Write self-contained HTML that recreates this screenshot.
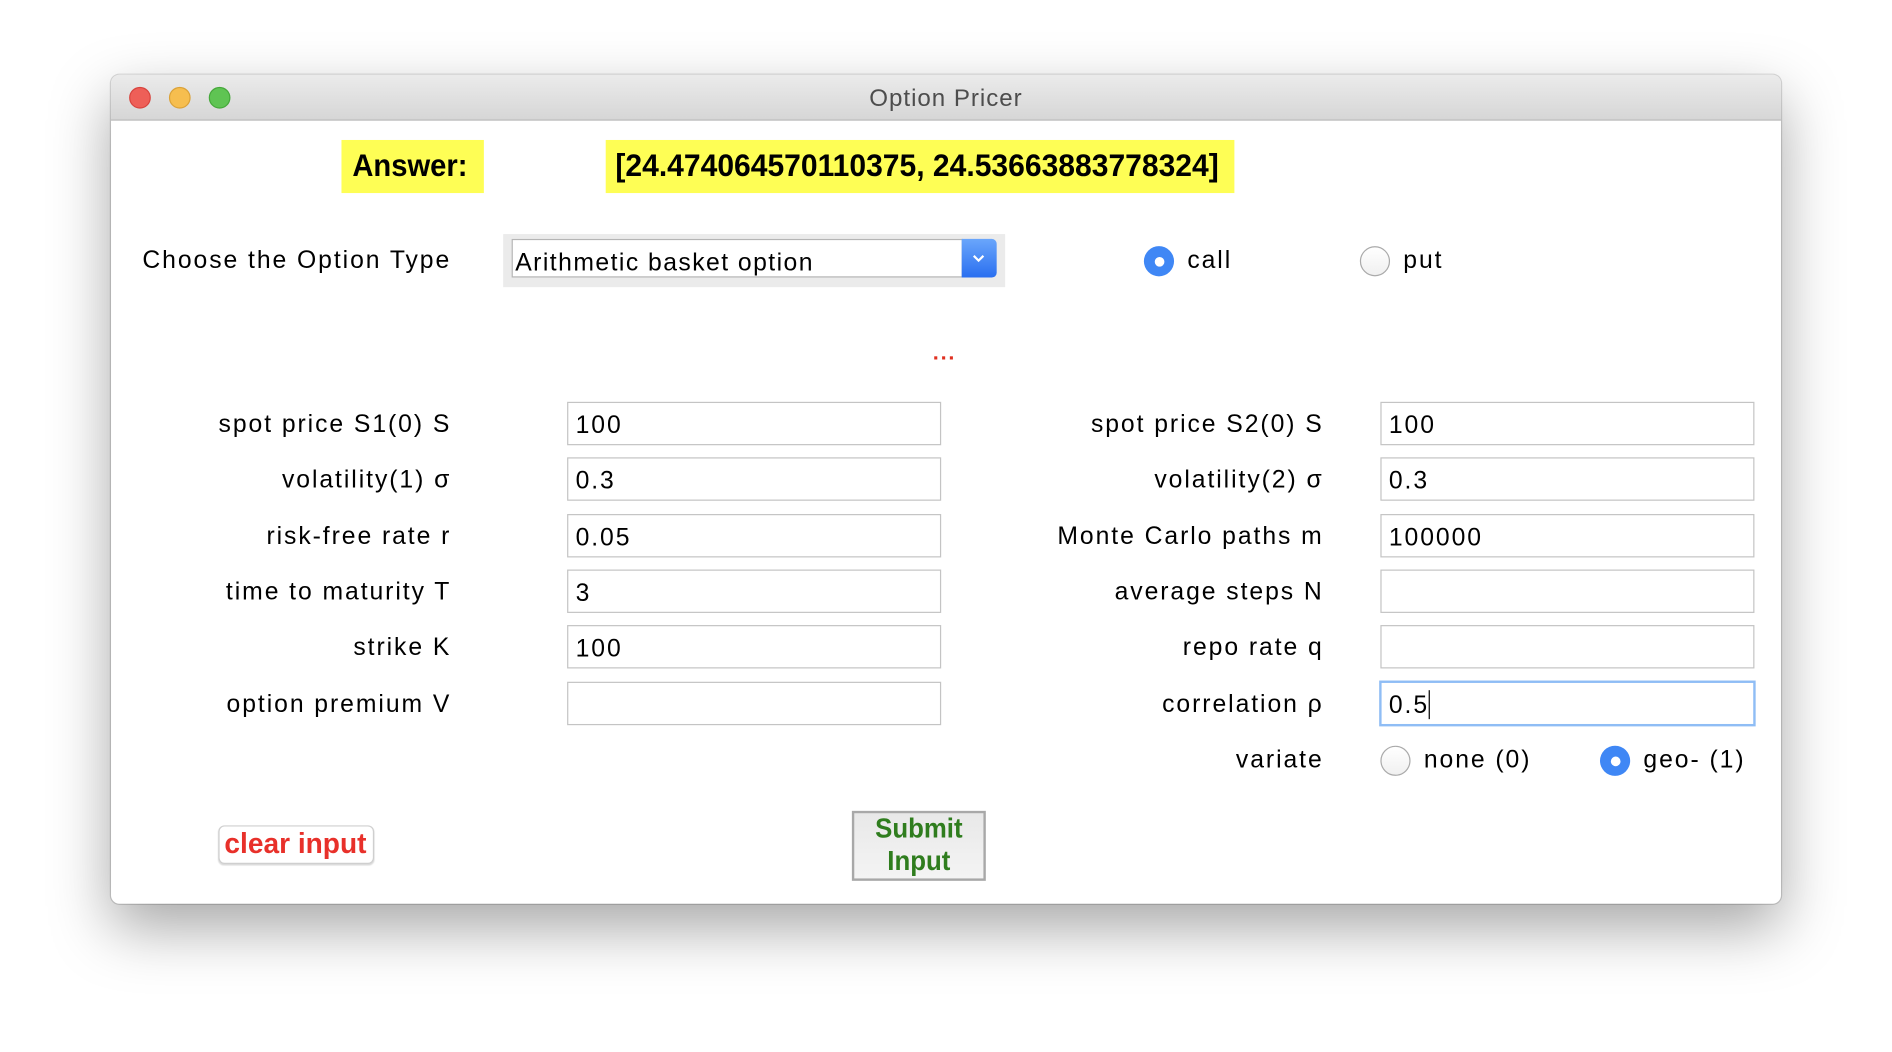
<!DOCTYPE html>
<html><head><meta charset="utf-8"><style>
html,body{margin:0;padding:0;background:#fff;overflow:hidden;width:1892px;height:1052px}
#s{position:absolute;left:0;top:0;width:1568px;height:872px;transform:scale(1.20663);transform-origin:0 0;font-family:"Liberation Sans",Arial,sans-serif;color:#000}
.a{position:absolute}
.win{left:92px;top:62px;width:1384px;height:687px;background:#fff;border-radius:7px;box-shadow:0 20px 50px rgba(0,0,0,.35),0 0 0 1px rgba(0,0,0,.15);overflow:hidden}
.tb{left:0;top:0;width:1384px;height:37px;background:linear-gradient(#ebebeb,#d6d6d6);border-bottom:1px solid #b8b8b8}
.dot{width:18px;height:18px;border-radius:50%;top:10px}
.lbl{font-size:20.5px;letter-spacing:1.6px;text-align:right;width:300px;line-height:24px}
.inp{width:308px;height:36px;border:1px solid #c4c4c4;background:#fff;font-size:20.5px;letter-spacing:1.6px;line-height:38px;padding-left:6px;box-sizing:border-box}
.rad{width:25px;height:25px;border-radius:50%;box-sizing:border-box}
.off{border:1px solid #aaa;background:linear-gradient(#fff,#f0f0f0)}
.on{background:#3f87f5}
.on:after{content:"";position:absolute;left:8.5px;top:8.5px;width:8px;height:8px;border-radius:50%;background:#fff}
.rt{font-size:20.5px;letter-spacing:1.6px;line-height:24px}
.b{font-weight:bold;display:inline-block;transform:scaleX(.92);transform-origin:0 50%;white-space:nowrap}
</style></head><body><div id="s">
<div class="a win">
 <div class="a tb"></div>
 <div class="a dot" style="left:15px;background:#ee5f58;border:1px solid #d8443e;box-sizing:border-box"></div>
 <div class="a dot" style="left:48px;background:#f6be4f;border:1px solid #dba238;box-sizing:border-box"></div>
 <div class="a dot" style="left:81px;background:#5fc453;border:1px solid #45a83a;box-sizing:border-box"></div>
 <div class="a" style="left:0;width:1384px;top:9px;text-align:center;font-size:20px;color:#4d4d4d;letter-spacing:.8px">Option Pricer</div>
</div>
<div class="a" style="left:283px;top:116px;width:118px;height:44px;background:#fefe55"></div>
<div class="a" style="left:292px;top:122px;font-size:26px"><span class="b" style="transform:scaleX(.93)">Answer:</span></div>
<div class="a" style="left:502px;top:116px;width:521px;height:44px;background:#fefe55"></div>
<div class="a" style="left:510px;top:122px;font-size:26px"><span class="b" style="transform:scaleX(.958)">[24.474064570110375, 24.53663883778324]</span></div>

<div class="a rt" style="left:118px;top:204px">Choose the Option Type</div>
<div class="a" style="left:417px;top:194px;width:416px;height:44px;background:#ebebeb"></div>
<div class="a" style="left:424px;top:198px;width:374px;height:32px;background:#fff;border:1px solid #b5b5b5;box-sizing:border-box;font-size:20.5px;letter-spacing:1.2px;line-height:38px;padding-left:2px">Arithmetic basket option</div>
<div class="a" style="left:797px;top:198px;width:29px;height:32px;background:linear-gradient(#6aa6fb,#2a6ff0);border-radius:0 4px 4px 0"></div>
<svg class="a" style="left:804px;top:207px" width="14" height="14"><path d="M3 5l4 4 4-4" fill="none" stroke="#fff" stroke-width="1.8"/></svg>
<div class="a rad on" style="left:948px;top:204px"></div>
<div class="a rt" style="left:984px;top:204px">call</div>
<div class="a rad off" style="left:1127px;top:204px"></div>
<div class="a rt" style="left:1163px;top:204px">put</div>
<div class="a" style="left:773px;top:282px;color:#e03020;font-size:18px;letter-spacing:1.5px;font-weight:bold">...</div>

<div class="a lbl" style="left:74px;top:340px">spot price S1(0) S</div>
<div class="a lbl" style="left:74px;top:386px">volatility(1) σ</div>
<div class="a lbl" style="left:74px;top:433px">risk-free rate r</div>
<div class="a lbl" style="left:74px;top:479px">time to maturity T</div>
<div class="a lbl" style="left:74px;top:525px">strike K</div>
<div class="a lbl" style="left:74px;top:572px">option premium V</div>
<div class="a inp" style="left:470px;top:333px;width:310px">100</div>
<div class="a inp" style="left:470px;top:379px;width:310px">0.3</div>
<div class="a inp" style="left:470px;top:426px;width:310px">0.05</div>
<div class="a inp" style="left:470px;top:472px;width:310px">3</div>
<div class="a inp" style="left:470px;top:518px;width:310px">100</div>
<div class="a inp" style="left:470px;top:565px;width:310px"></div>

<div class="a lbl" style="left:797px;top:340px">spot price S2(0) S</div>
<div class="a lbl" style="left:797px;top:386px">volatility(2) σ</div>
<div class="a lbl" style="left:797px;top:433px">Monte Carlo paths m</div>
<div class="a lbl" style="left:797px;top:479px">average steps N</div>
<div class="a lbl" style="left:797px;top:525px">repo rate q</div>
<div class="a lbl" style="left:797px;top:572px">correlation ρ</div>
<div class="a lbl" style="left:797px;top:618px">variate</div>
<div class="a inp" style="left:1144px;top:333px;width:310px">100</div>
<div class="a inp" style="left:1144px;top:379px;width:310px">0.3</div>
<div class="a inp" style="left:1144px;top:426px;width:310px">100000</div>
<div class="a inp" style="left:1144px;top:472px;width:310px"></div>
<div class="a inp" style="left:1144px;top:518px;width:310px"></div>
<div class="a inp" style="left:1143px;top:564px;width:312px;height:38px;border:2px solid #8fbdf5;line-height:38px">0.5<span style="border-left:1px solid #000;margin-left:0px;display:inline-block;height:24px;vertical-align:-5px"></span></div>
<div class="a rad off" style="left:1144px;top:618px"></div>
<div class="a rt" style="left:1180px;top:618px">none (0)</div>
<div class="a rad on" style="left:1326px;top:618px"></div>
<div class="a rt" style="left:1362px;top:618px">geo- (1)</div>

<div class="a" style="left:181px;top:684px;width:129px;height:32px;border:1px solid #cfcfcf;border-radius:5px;box-sizing:border-box;box-shadow:0 1px 1px rgba(0,0,0,.15);background:#fff"></div>
<div class="a" style="left:186px;top:686px;font-size:24px;color:#e8302a;line-height:28px"><span class="b" style="transform:scaleX(.97)">clear input</span></div>
<div class="a" style="left:706px;top:672px;width:111px;height:58px;border:2px solid #a8a8a8;box-sizing:border-box;background:linear-gradient(#e8e8e8,#f4f4f4)"></div>
<div class="a" style="left:706px;top:673px;width:111px;text-align:center;font-size:23px;line-height:27px;color:#2f7d1e;font-weight:bold"><div style="transform:scaleX(.93)">Submit<br>Input</div></div>
</div></body></html>
